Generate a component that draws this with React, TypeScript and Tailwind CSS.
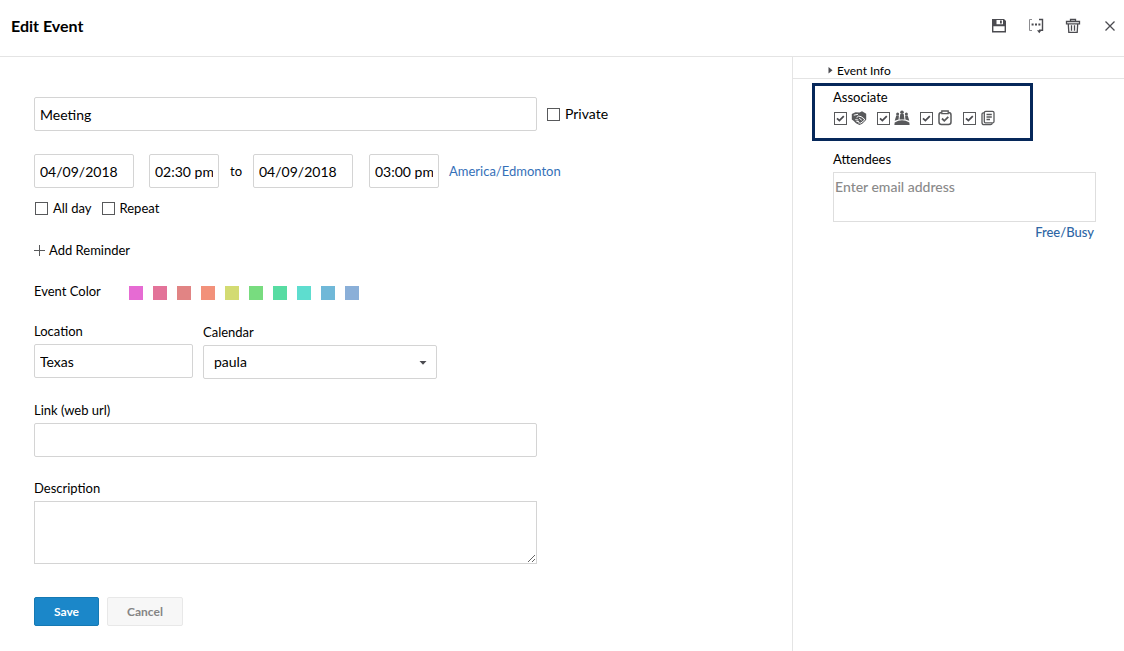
import React, { useState } from 'react';
import clsx from 'clsx';

const eventColors = [
    { name: 'Orchid', className: 'bg-[#e66bd3]' },
    { name: 'Pink', className: 'bg-[#e37399]' },
    { name: 'Rose', className: 'bg-[#e18484]' },
    { name: 'Coral', className: 'bg-[#f2917a]' },
    { name: 'Olive', className: 'bg-[#d3db72]' },
    { name: 'Green', className: 'bg-[#78dc7f]' },
    { name: 'Mint', className: 'bg-[#57dca2]' },
    { name: 'Turquoise', className: 'bg-[#5eddcf]' },
    { name: 'Sky', className: 'bg-[#70b8d8]' },
    { name: 'Blue', className: 'bg-[#8aafd8]' },
];

const fieldClass = 'h-[34px] rounded-xs border border-[#d4d4d4] bg-white px-[5px] text-sm text-black outline-none';

const SaveIcon = () => (
    <svg width="16" height="16" viewBox="0 0 16 16" fill="#4b4b50">
        <path
            fillRule="evenodd"
            d="M1 1h12l2 2v11.500h-14zM5.500 2v4.300h6.500V2zM2.400 8.200v4.900h11.200V8.200z"
        />
        <path d="M9 2.500h1.800v3H9z" />
    </svg>
);

const MoreIcon = () => (
    <svg width="16" height="16" viewBox="0 0 16 16" fill="none" stroke="#4b4b50">
        <path d="M4 1.500H1.500v11H4" strokeWidth="1" stroke="#8c8c90" />
        <path d="M11 1.500h3.500v10.700h-3.500" strokeWidth="1.400" />
        <path d="M9 12.200h4.500l-2.200 3z" fill="#4b4b50" stroke="none" />
        <path d="M3.600 6.500h2M7 6.500h2M10.400 6.500h2" strokeWidth="2" />
    </svg>
);

const TrashIcon = () => (
    <svg width="16" height="16" viewBox="0 0 16 16" fill="none" stroke="#4b4b50" strokeWidth="1.300">
        <path d="M5.500 3.300V1.500h5v1.800M1.500 3.500h13v2.400h-13zM3.300 5.900l.5 8.500h8.400l.5-8.500" />
        <path d="M6.500 7.200v5.500M9.500 7.200v5.500" strokeWidth="1.300" />
    </svg>
);

const CloseIcon = () => (
    <svg width="16" height="16" viewBox="0 0 16 16" fill="none" stroke="#4b4b50" strokeWidth="1.300">
        <path d="M3.500 3.500l9 9M12.500 3.500l-9 9" />
    </svg>
);

const HandshakeIcon = () => (
    <svg width="16" height="16" viewBox="0 0 16 16">
        <path
            d="M.8 4L4.500 2.200l4 .3L11 1.200l4.200 2.600v6l-1.400 1.400-2.600 2.600-2.700 1.100L5 13.300 2.500 10.800.8 9.500z"
            fill="#58595b"
        />
        <path
            d="M2.800 5.200l4.200-.9M5.600 7.600l2-1.500 2.400.5 3.400 2.400v1.200l-3.600 2.900-2.600-.3M4.300 9.700l3 .3M5.400 11.600l2.500-.1M8.200 8.200l2.600 2"
            fill="none"
            stroke="#fff"
            strokeWidth="1"
        />
    </svg>
);

const PeopleIcon = () => (
    <svg width="16" height="16" viewBox="0 0 16 16" fill="#58595b">
        <circle cx="8" cy="2.200" r="1.800" />
        <circle cx="3.600" cy="4" r="1.500" />
        <circle cx="12.400" cy="4" r="1.500" />
        <path d="M6.300 4h3.400l.8 5.400h-5z" />
        <path d="M2.300 5.400h2.600L4.600 9.600.7 10.800zM13.700 5.400h-2.600l.3 4.200 3.900 1.200z" />
        <path d="M.4 15l.3-2.400Q8 7.800 15.300 12.600L15.600 15z" />
    </svg>
);

const TaskIcon = () => (
    <svg width="16" height="16" viewBox="0 0 16 16" fill="none" stroke="#58595b" strokeWidth="1.500">
        <rect x="2" y="2.500" width="12" height="12" rx="2.500" />
        <path d="M4.800 1h6.400v2.600H4.800z" fill="#fff" strokeWidth="1.300" />
        <path d="M5 8.500l2.300 2.300L11.300 6.800" strokeWidth="1.800" />
    </svg>
);

const NotesIcon = () => (
    <svg width="16" height="16" viewBox="0 0 16 16" fill="none" stroke="#58595b" strokeWidth="1.300">
        <rect x="4.300" y="1.300" width="9.700" height="11.600" rx="1.500" />
        <path d="M4 2.800H3.400q-1.400 0-1.400 1.400v8.300Q2 14.700 4.200 14.700h6.300q1.500 0 1.800-1.500" />
        <path d="M6.500 4.500h5.300M6.500 7h5.300M6.500 9.500h3.500" strokeWidth="1.500" />
    </svg>
);

const CaretIcon = () => (
    <svg width="8" height="5" viewBox="0 0 8 5" fill="#4b4b50">
        <path d="M.5 1h7L4 4.700z" />
    </svg>
);

const actions = [
    { label: 'Save', Icon: SaveIcon },
    { label: 'More', Icon: MoreIcon },
    { label: 'Delete', Icon: TrashIcon },
    { label: 'Close', Icon: CloseIcon },
];

const associations = [
    { id: 'deals', label: 'Deals', Icon: HandshakeIcon },
    { id: 'contacts', label: 'Contacts', Icon: PeopleIcon },
    { id: 'tasks', label: 'Tasks', Icon: TaskIcon },
    { id: 'notes', label: 'Notes', Icon: NotesIcon },
];

type CheckboxProps = {
    id: string;
    label?: string;
    defaultChecked?: boolean;
};

const Checkbox: React.FC<CheckboxProps> = ({ id, label, defaultChecked }) => (
    <span className="grid size-[13px] shrink-0 place-items-center">
        <input
            id={id}
            type="checkbox"
            aria-label={label}
            defaultChecked={defaultChecked}
            className="peer col-start-1 row-start-1 size-[13px] appearance-none border border-[#58595b] bg-white"
        />
        <svg
            className="pointer-events-none invisible col-start-1 row-start-1 peer-checked:visible"
            width="13"
            height="13"
            viewBox="0 0 13 13"
            fill="none"
            stroke="#4b4b50"
            strokeWidth="1.800"
        >
            <path d="M3 6.300l2.400 2.300L9.800 4.200" />
        </svg>
    </span>
);

const App: React.FC = () => {
    const [color, setColor] = useState('');

    return (
        <div className="flex min-h-screen flex-col bg-white font-['Lato',sans-serif] text-[13px] leading-5 text-black">
            <header className="flex h-[57px] items-center justify-between border-b border-[#e4e4e4] pr-1.5 pb-1 pl-[11px]">
                <h1 className="text-base font-bold">Edit Event</h1>
                <div className="flex items-center gap-[21px]">
                    {actions.map(({ label, Icon }) => (
                        <button key={label} type="button" aria-label={label}>
                            <Icon />
                        </button>
                    ))}
                </div>
            </header>

            <div className="flex flex-1">
                <form className="min-w-0 flex-1 pt-10 pb-6 pl-[34px]" onSubmit={(e) => e.preventDefault()}>
                    <div className="flex items-center">
                        <input
                            type="text"
                            aria-label="Title"
                            defaultValue="Meeting"
                            className={clsx(fieldClass, 'w-[503px]')}
                        />
                        <div className="ml-2.5 flex items-center gap-[5px]">
                            <Checkbox id="private" />
                            <label htmlFor="private" className="text-sm">
                                Private
                            </label>
                        </div>
                    </div>

                    <div className="mt-[23px] flex items-center">
                        <input
                            type="text"
                            aria-label="Start date"
                            defaultValue="04/09/2018"
                            className={clsx(fieldClass, 'w-[100px]')}
                        />
                        <input
                            type="text"
                            aria-label="Start time"
                            defaultValue="02:30 pm"
                            className={clsx(fieldClass, 'ml-[15px] w-[70px]')}
                        />
                        <span className="w-[34px] text-center">to</span>
                        <input
                            type="text"
                            aria-label="End date"
                            defaultValue="04/09/2018"
                            className={clsx(fieldClass, 'w-[100px]')}
                        />
                        <input
                            type="text"
                            aria-label="End time"
                            defaultValue="03:00 pm"
                            className={clsx(fieldClass, 'ml-4 w-[70px]')}
                        />
                        <a href="#timezone" className="ml-2.5 text-[#3570b8]">
                            America/Edmonton
                        </a>
                    </div>

                    <div className="mt-2.5 flex items-center gap-2.5 pl-px">
                        <div className="flex items-center gap-[5px]">
                            <Checkbox id="all-day" />
                            <label htmlFor="all-day">All day</label>
                        </div>
                        <div className="flex items-center gap-[5px]">
                            <Checkbox id="repeat" />
                            <label htmlFor="repeat">Repeat</label>
                        </div>
                    </div>

                    <button type="button" className="mt-[22px] flex items-center gap-1">
                        <svg width="11" height="11" viewBox="0 0 11 11" stroke="#58595b">
                            <path d="M5.500 0v11M0 5.500h11" />
                        </svg>
                        Add Reminder
                    </button>

                    <div className="mt-[21px] flex items-end">
                        <span className="w-[95px]">Event Color</span>
                        <div className="flex gap-2.5 pb-px">
                            {eventColors.map(({ name, className }) => (
                                <button
                                    key={name}
                                    type="button"
                                    aria-label={name}
                                    aria-pressed={color === name}
                                    onClick={() => setColor(name)}
                                    className={clsx('size-3.5', className)}
                                />
                            ))}
                        </div>
                    </div>

                    <div className="mt-5 flex items-start gap-2.5">
                        <div className="flex flex-col gap-[3px]">
                            <label htmlFor="location">Location</label>
                            <input
                                id="location"
                                type="text"
                                defaultValue="Texas"
                                className={clsx(fieldClass, 'w-[159px]')}
                            />
                        </div>
                        <div className="flex flex-col gap-[3px] pt-px">
                            <label htmlFor="calendar">Calendar</label>
                            <div className="grid w-[234px] items-center">
                                <select
                                    id="calendar"
                                    defaultValue="paula"
                                    className="col-start-1 row-start-1 h-[34px] appearance-none rounded-xs border border-[#d4d4d4] bg-white px-2.5 text-sm outline-none"
                                >
                                    <option value="paula">paula</option>
                                </select>
                                <span className="pointer-events-none col-start-1 row-start-1 justify-self-end pr-2.5">
                                    <CaretIcon />
                                </span>
                            </div>
                        </div>
                    </div>

                    <div className="mt-[21px] flex w-[503px] flex-col gap-[3px]">
                        <label htmlFor="link">Link (web url)</label>
                        <input id="link" type="text" className={fieldClass} />
                    </div>

                    <div className="mt-[21px] flex w-[503px] flex-col gap-[3px]">
                        <label htmlFor="description">Description</label>
                        <textarea
                            id="description"
                            className="h-[63px] resize border border-[#d4d4d4] px-[5px] py-1 text-sm outline-none"
                        />
                    </div>

                    <div className="mt-[33px] flex gap-2">
                        <button
                            type="submit"
                            className="h-[29px] w-[65px] rounded-xs border border-[#1579b3] bg-[#1b87c9] text-xs font-bold text-white"
                        >
                            Save
                        </button>
                        <button
                            type="button"
                            className="h-[29px] w-[76px] rounded-xs border border-[#e8e8e8] bg-[#f7f7f7] text-xs font-bold text-[#858585]"
                        >
                            Cancel
                        </button>
                    </div>
                </form>

                <aside className="w-[332px] border-l border-[#e4e4e4]">
                    <button
                        type="button"
                        className="flex h-[22px] w-full items-center gap-1 border-b border-[#e4e4e4] pt-1.5 pl-[35px] text-xs"
                    >
                        <svg width="5" height="8" viewBox="0 0 5 8" fill="#4b4b50">
                            <path d="M.5 0v6.500L4.500 3.200z" />
                        </svg>
                        Event Info
                    </button>

                    <section className="mt-1 ml-[19px] h-[58px] w-[221px] border-3 border-[#06285a] pt-px pl-[18px]">
                        <h2>Associate</h2>
                        <div className="mt-[3px] flex gap-2.5 pl-px">
                            {associations.map(({ id, label, Icon }) => (
                                <div key={id} className="flex items-center gap-1">
                                    <Checkbox id={id} label={label} defaultChecked />
                                    <label htmlFor={id}>
                                        <Icon />
                                    </label>
                                </div>
                            ))}
                        </div>
                    </section>

                    <section className="mt-2 mr-7 ml-10 flex flex-col">
                        <label htmlFor="attendees">Attendees</label>
                        <textarea
                            id="attendees"
                            placeholder="Enter email address"
                            className="mt-[3px] h-[50px] resize-none border border-[#dedede] px-px py-1 text-sm leading-5 font-medium outline-none placeholder:text-[#8a8a8a]"
                        />
                        <a href="#free-busy" className="mr-0.5 self-end font-medium text-[#2e66a5]">
                            Free/Busy
                        </a>
                    </section>
                </aside>
            </div>
        </div>
    );
};

export default App;
